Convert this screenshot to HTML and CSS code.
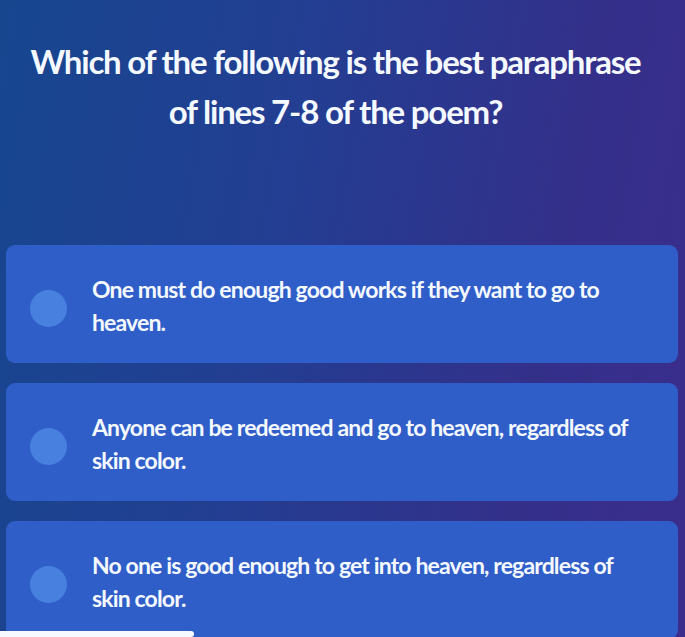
FILE: index.html
```html
<!DOCTYPE html>
<html>

<head>
    <meta name="viewport" content="width=device-width, initial-scale=1.0">
    <title>Quiz question</title>
    <link rel="stylesheet" href="styles.css">
</head>

<body>
    <div class="screen">
        <h1 class="question">Which of the following is the best paraphrase<br>of lines 7-8 of the poem?</h1>

        <div class="answers">
            <div class="answer">
                <span class="dot"></span>
                <p>One must do enough good works if they want to go to heaven.</p>
            </div>
            <div class="answer">
                <span class="dot"></span>
                <p>Anyone can be redeemed and go to heaven, regardless of skin color.</p>
            </div>
            <div class="answer">
                <span class="dot"></span>
                <p>No one is good enough to get into heaven, regardless of skin color.</p>
            </div>
        </div>

        <div class="progress"></div>
    </div>
</body>

</html>
```

FILE: styles.css
```css
* {
    box-sizing: border-box;
    font-family: Lato, "Open Sans", sans-serif;
}

html,
body {
    margin: 0;
    height: 100%;
    overflow: hidden;
}

.screen {
    height: 637px;
    background: linear-gradient(100deg, #17468f 0%, #233e92 40%, #33308a 75%, #3b2d8c 100%);
    color: #f4f8ff;
    padding-top: 36px;
    position: relative;
}

.question {
    margin: 0;
    text-align: center;
    font-size: 33px;
    font-weight: 700;
    line-height: 50px;
    letter-spacing: -1.2px;
    padding: 0 34px 0 20px;
}

.answers {
    margin-top: 109px;
    display: flex;
    flex-direction: column;
    gap: 20px;
    padding: 0 7px 0 6px;
}

.answer {
    display: flex;
    align-items: center;
    gap: 25px;
    background-color: #2f5ec8;
    border-radius: 9px;
    padding: 4px 36px 0 24px;
    height: 118px;
}

.dot {
    flex: none;
    width: 37px;
    height: 37px;
    margin-top: 4px;
    border-radius: 50%;
    background-color: #4880e0;
}

.answer p {
    margin: 0;
    font-size: 23px;
    font-weight: 700;
    line-height: 33px;
    letter-spacing: -0.85px;
}

.progress {
    position: absolute;
    left: 0;
    bottom: 0;
    width: 194px;
    height: 6px;
    background-color: #f6f9ff;
    border-radius: 0 4px 4px 0;
}
```
